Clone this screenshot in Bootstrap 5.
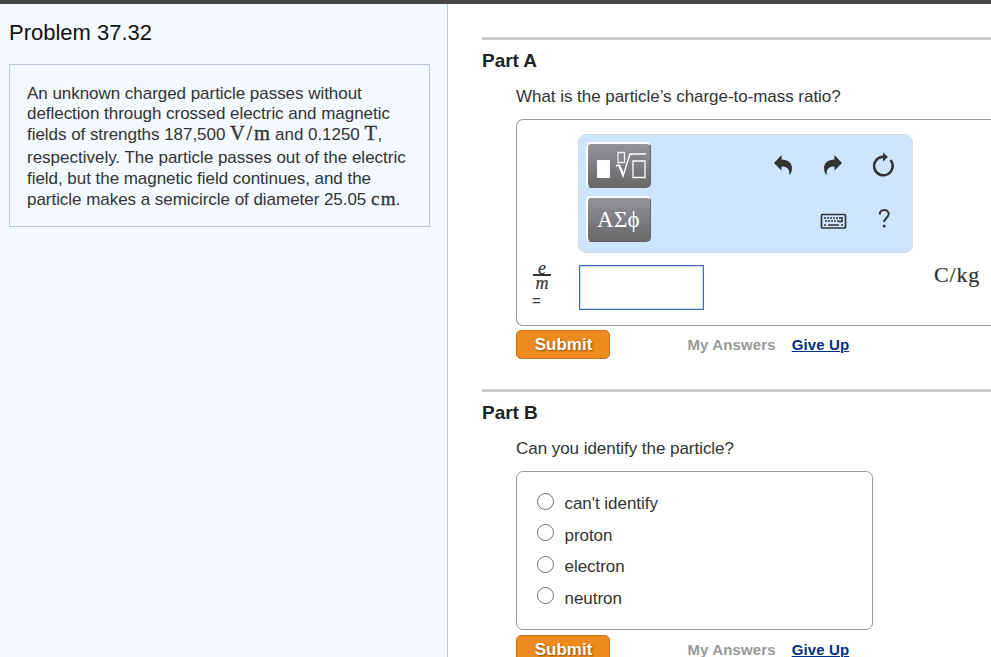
<!DOCTYPE html>
<html lang="en">
<head>
<meta charset="utf-8">
<meta name="viewport" content="width=device-width, initial-scale=1">
<title>Problem 37.32</title>
<link href="https://cdn.jsdelivr.net/npm/bootstrap@5.3.0/dist/css/bootstrap.min.css" rel="stylesheet">
<style>
  body { font: 17px/20px "Liberation Sans", Arial, sans-serif; color: #333; height: 657px; border-top: 4px solid #464646; letter-spacing: -.045px; }
  .problem-pane { width: 448px; background: #f4f9ff; border-right: 1px solid #b9cadd; padding: 16px 17px 0 9px; }
  .problem-pane h1 { font-size: 22px; line-height: 26px; color: #111; margin: 0 0 18px; letter-spacing: 0; }
  .statement { height: 163px; border: 1px solid #b9cadd; padding: 19px 0 0 17px; white-space: nowrap; letter-spacing: -.04px; }
  .statement span.ln { display: block; height: 20px; line-height: 20px; }
  .statement span.l3 { height: 22px; line-height: 22px; }
  .statement span.l4 { height: 23px; line-height: 23px; letter-spacing: -.01px; }
  .statement span.l5 { height: 21px; line-height: 20px; }
  .tex { font-family: "Liberation Serif", serif; font-size: 20.5px; line-height: 0; letter-spacing: 1.7px; margin-right: -1.2px; -webkit-text-stroke: .3px currentColor; }
  .tex-narrow { font-size: 19px; letter-spacing: 1.3px; }
  .work-pane { padding-left: 34px; height: 653px; overflow: hidden; }
  .top-space { height: 33px; }
  .part { height: 352px; }
  .part-b { height: 268px; }
  .part-rule { height: 3px; background: #ccc; }
  .part h2 { font-size: 19px; font-weight: bold; line-height: 22px; color: #222; margin: 10px 0 0; }
  .part-body { padding-left: 34px; }
  .question { margin: 15px 0 12px; line-height: 20px; }
  .answer-box { height: 207px; border: 1px solid #999; border-right: 0; border-radius: 7px 0 0 7px; padding: 14px 0 0 61px; }
  .math-tools { width: 335px; height: 119px; background: #cfe5ff; border: 1px solid #d5dbe4; border-radius: 8px; padding: 7px 14px 0 8px; }
  .tool { width: 65px; height: 46px; border: 1px solid #666; border-top: 2px solid #fff; border-left: 2px solid #fff; border-radius: 5px; background: linear-gradient(#92929a, #68686a); color: #fff; padding: 0; display: block; margin-left: -1px; }
  .tool-greek { font: 23px/38px "Liberation Serif", serif; letter-spacing: .3px; margin-top: 8px; padding-right: 1px; }
  .tool-icons { width: 130px; }
  .glyph { height: 54px; color: #333; }
  .entry { margin: 11px 0 0 -46px; }
  .fraction { width: 18px; margin-left: 1px; font-style: italic; font-family: "Liberation Serif", serif; font-size: 18px; text-align: center; -webkit-text-stroke: .2px currentColor; }
  .fraction .top { border-bottom: 2px solid #333; height: 12px; line-height: 8px; }
  .fraction .bottom { height: 16px; line-height: 15px; }
  .equals { font-size: 15px; line-height: 17px; height: 17px; padding-left: 0; }
  .entry-field { width: 125px; height: 45px; margin-top: 1px; border: 1px solid #3a6bc0; border-radius: 0; padding: 0; box-shadow: inset 0 0 0 1px #c9dcf8; }
  .unit { font: 22px/22px "Liberation Serif", serif; letter-spacing: .8px; margin-right: 11px; -webkit-text-stroke: .2px currentColor; }
  .actions { padding-top: 4px; }
  .part-b .actions { padding-top: 5px; }
  .submit { width: 94px; height: 29px; background: #ee8b1e; border: 1px solid #c6731f; border-radius: 5px; color: #fff; font-weight: bold; font-size: 17px; line-height: 27px; padding: 0 0 0 1px; text-shadow: 1px 1px 2px #8a4a00; }
  .submit:hover { background: #e07f14; color: #fff; }
  .my-answers { font-size: 15px; font-weight: bold; color: #999; margin-left: 77.5px; letter-spacing: .12px; }
  .give-up { font-size: 15px; font-weight: bold; color: #003087; margin-left: 16px; letter-spacing: .12px; text-underline-offset: 1px; text-decoration-thickness: 1px; }
  .choices { width: 357px; height: 159px; border: 1px solid #999; border-radius: 7px; padding: 15px 0 0 20px; }
  .choice { height: 31.5px; display: flex; }
  .choice input { appearance: none; width: 17px; height: 17px; border: 1px solid #707070; border-radius: 50%; background: #fff; margin: 5.9px 10.5px 0 0; }
  .choice label { line-height: 33px; }
</style>
<script src="https://cdn.jsdelivr.net/npm/bootstrap@5.3.0/dist/js/bootstrap.bundle.min.js"></script>
</head>
<body class="d-flex overflow-hidden bg-white">
<aside class="problem-pane flex-shrink-0">
  <h1 class="fw-normal">Problem 37.32</h1>
  <div class="statement">
    <span class="ln">An unknown charged particle passes without</span>
    <span class="ln">deflection through crossed electric and magnetic</span>
    <span class="ln l3">fields of strengths 187,500 <span class="tex">V/m</span> and 0.1250 <span class="tex">T</span>,</span>
    <span class="ln l4">respectively. The particle passes out of the electric</span>
    <span class="ln l5">field, but the magnetic field continues, and the</span>
    <span class="ln l5">particle makes a semicircle of diameter 25.05 <span class="tex tex-narrow">cm</span>.</span>
  </div>
</aside>
<main class="work-pane flex-grow-1">
  <div class="top-space"></div>
  <section class="part">
    <div class="part-rule"></div>
    <h2>Part A</h2>
    <div class="part-body">
      <p class="question">What is the particle’s charge-to-mass ratio?</p>
      <div class="answer-box">
        <div class="math-tools d-flex justify-content-between">
          <div>
            <button class="tool" type="button" aria-label="Templates">
              <svg width="62" height="43" viewBox="0 0 62 43" fill="none" stroke="#fff"><path d="M9 16h13v18H9z" fill="#fff" stroke="none"/><path d="M30 8.500h6.500v10H30z" stroke="#eee" stroke-width="1.300"/><path d="M28 22l3-1 4 11 7-22h16" stroke-width="1.400"/><path d="M31 21l4 9" stroke-width="2"/><path d="M45 17h12v16.500H45z" stroke-width="1.300"/></svg>
            </button>
            <button class="tool tool-greek" type="button">ΑΣϕ</button>
          </div>
          <div class="tool-icons">
            <div class="glyph d-flex justify-content-between align-items-start">
              <svg class="mt-2" width="30" height="32" viewBox="0 0 30 32" fill="currentColor"><path d="M6 13l7.500-8v4.500C20 9.500 24 13.500 24 18c0 3-1 5-2.500 7.500C21.500 19 19.500 16.500 13.500 16.500v4z"/></svg>
              <svg class="mt-2" width="30" height="32" viewBox="0 0 30 32" fill="currentColor"><path d="M24 13l-7.500-8v4.500C10 9.500 6 13.500 6 18c0 3 1 5 2.500 7.500C8.500 19 10.500 16.500 16.500 16.500v4z"/></svg>
              <svg class="mt-2" width="30" height="32" viewBox="0 0 30 32"><path d="M22.500 10A9.300 9.300 0 1 1 15 6.700" fill="none" stroke="currentColor" stroke-width="2.500"/><path d="M15 2.500l5 4.600-5 4.400z" fill="currentColor"/></svg>
            </div>
            <div class="glyph d-flex justify-content-end align-items-start">
              <svg class="mt-2" width="30" height="32" viewBox="0 0 30 32" fill="none" stroke="currentColor"><rect x="3.500" y="10.500" width="24" height="13.500" rx="1" stroke-width="1.700"/><path d="M6 14h17M7 17h14M6 21h2m15 0h2" stroke-width="1.500" stroke-dasharray="2 1"/><path d="M10 21h11M24 13v4.500h-3" stroke-width="1.600"/></svg>
              <svg class="mt-2 ms-4" width="26" height="32" viewBox="0 0 26 32"><path d="M7.700 10.500c0-6 9-6 9-.5 0 4-4.500 4-4.500 8" fill="none" stroke="currentColor" stroke-width="2"/><circle cx="12.200" cy="22" r="1.500" fill="currentColor"/></svg>
            </div>
          </div>
        </div>
        <div class="entry d-flex align-items-start">
          <div style="width:47px">
            <div class="fraction"><div class="top">e</div><div class="bottom">m</div></div>
            <div class="equals">=</div>
          </div>
          <input class="entry-field" type="text" aria-label="Ratio">
          <span class="unit ms-auto">C/kg</span>
        </div>
      </div>
      <div class="actions d-flex align-items-center">
        <button class="btn submit" type="button">Submit</button>
        <span class="my-answers">My Answers</span>
        <a class="give-up" href="#">Give Up</a>
      </div>
    </div>
  </section>
  <section class="part part-b">
    <div class="part-rule"></div>
    <h2>Part B</h2>
    <div class="part-body">
      <p class="question">Can you identify the particle?</p>
      <div class="choices">
        <div class="choice"><input type="radio" name="particle" id="c1"><label for="c1">can't identify</label></div>
        <div class="choice"><input type="radio" name="particle" id="c2"><label for="c2">proton</label></div>
        <div class="choice"><input type="radio" name="particle" id="c3"><label for="c3">electron</label></div>
        <div class="choice"><input type="radio" name="particle" id="c4"><label for="c4">neutron</label></div>
      </div>
      <div class="actions d-flex align-items-center">
        <button class="btn submit" type="button">Submit</button>
        <span class="my-answers">My Answers</span>
        <a class="give-up" href="#">Give Up</a>
      </div>
    </div>
  </section>
</main>
</body>
</html>
